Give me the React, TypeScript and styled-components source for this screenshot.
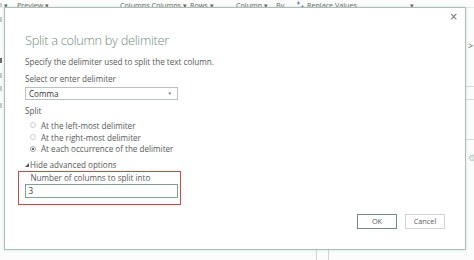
import React from "react";
import styled, { createGlobalStyle } from "styled-components";

const Global = createGlobalStyle`
  html, body { margin: 0; padding: 0; background: #ffffff; }
  body { font-family: "Open Sans", "Noto Sans", sans-serif; overflow: hidden; }
  * { box-sizing: border-box; }
`;

const Screen = styled.div`
  position: relative;
  width: 474px;
  height: 260px;
  overflow: hidden;
  background: #fbfcfb;
`;

const Ribbon = styled.div`
  display: flex;
  align-items: flex-end;
  height: 8px;
  border-bottom: 1px solid #e4ebe7;
  font-size: 7.2px;
  color: #5c6a62;
  line-height: 8px;
  overflow: hidden;
  white-space: nowrap;
`;

const RibbonItem = styled.span<{ $w: number }>`
  flex: 0 0 ${(p) => p.$w}px;
  display: flex;
  align-items: center;
  overflow: hidden;
  transform: translateY(2px);
`;

const SideStrip = styled.div`
  position: absolute;
  top: 9px;
  right: 0;
  width: 8px;
  height: 251px;
  display: flex;
  flex-direction: column;
`;

const SideLine = styled.div<{ $top: number }>`
  margin-top: ${(p) => p.$top}px;
  height: 1px;
  background: #d6dcd9;
`;

const SideGlyph = styled.div<{ $top: number; $color: string }>`
  margin-top: ${(p) => p.$top}px;
  font-size: 9px;
  line-height: 9px;
  color: ${(p) => p.$color};
  padding-left: 2px;
`;

const LeftStrip = styled.div`
  position: absolute;
  top: 9px;
  left: 0;
  width: 4px;
  height: 240px;
  display: flex;
  flex-direction: column;
`;

const LeftMark = styled.div<{ $top: number; $dark?: boolean }>`
  margin-top: ${(p) => p.$top}px;
  width: 2px;
  height: 5px;
  background: ${(p) => (p.$dark ? "#6a6a6a" : "#c5cbc8")};
`;

const BottomTicks = styled.div`
  position: absolute;
  top: 250px;
  left: 316px;
  display: flex;
  gap: 11px;
`;

const Tick = styled.div`
  width: 1px;
  height: 10px;
  background: #d0d6d3;
`;

const Dialog = styled.div`
  position: absolute;
  left: 4px;
  top: 7px;
  width: 462px;
  height: 243px;
  background: #ffffff;
  border: 1.5px solid #a9bfb4;
  box-shadow: 0 0 3px rgba(120, 150, 135, 0.25);
  padding: 24px 20px 0 20px;
  display: flex;
  flex-direction: column;
  color: #555a57;
`;

const Close = styled.button`
  position: absolute;
  top: 4px;
  right: 7px;
  border: none;
  background: none;
  padding: 0;
  font-family: "DejaVu Sans", sans-serif;
  font-size: 10px;
  line-height: 10px;
  color: #6d6d6d;
`;

const Title = styled.h1`
  margin: 0;
  font-family: "Open Sans", sans-serif;
  font-weight: 300;
  font-size: 12.8px;
  line-height: 16.5px;
  color: #6f8b7c;
  letter-spacing: -0.3px;
`;

const Text = styled.div<{ $mt: number }>`
  margin-top: ${(p) => p.$mt}px;
  font-size: 8.1px;
  line-height: 12px;
  color: #555a57;
`;

const SelectBox = styled.div`
  margin-top: 2.5px;
  width: 153px;
  height: 12.5px;
  border: 1px solid #b9c3be;
  display: flex;
  align-items: center;
  justify-content: space-between;
  padding: 0 5px 0 3px;
  font-size: 8.1px;
  color: #333;
`;

const Caret = styled.span`
  font-size: 4.5px;
  color: #777;
`;

const RadioList = styled.div`
  margin-top: 2.6px;
  display: flex;
  flex-direction: column;
  padding-left: 5px;
`;

const RadioRow = styled.label`
  display: flex;
  align-items: center;
  gap: 5px;
  height: 11.75px;
  font-size: 8.1px;
  color: #555a57;
`;

const RadioDot = styled.span<{ $on?: boolean }>`
  width: 6px;
  height: 6px;
  border-radius: 50%;
  border: 1px solid ${(p) => (p.$on ? "#9aa39f" : "#c9d0cc")};
  display: flex;
  align-items: center;
  justify-content: center;
  &::after {
    content: "";
    width: 2px;
    height: 2px;
    border-radius: 50%;
    background: ${(p) => (p.$on ? "#333" : "transparent")};
  }
`;

const Toggle = styled.div`
  margin-top: 4px;
  display: flex;
  align-items: center;
  gap: 1px;
  height: 12px;
  font-size: 8.1px;
  color: #555a57;
`;

const Tri = styled.svg`
  width: 4px;
  height: 4px;
`;

const Advanced = styled.div`
  margin-top: 0px;
  margin-left: -7px;
  width: 163px;
  height: 34px;
  border: 1.6px solid #d9443f;
  padding: 0 0 0 5.5px;
  display: flex;
  flex-direction: column;
`;

const FieldLabel = styled.div`
  padding-left: 6px;
  font-size: 8.1px;
  line-height: 11px;
  color: #555a57;
`;

const NumInput = styled.div`
  margin-top: 1.4px;
  width: 153px;
  height: 13.5px;
  border: 1.3px solid #7fa292;
  padding-left: 3px;
  font-size: 8.1px;
  line-height: 11px;
  color: #444;
`;

const Footer = styled.div`
  margin-top: 9px;
  display: flex;
  justify-content: flex-end;
  gap: 8px;
`;

const Button = styled.button<{ $primary?: boolean }>`
  width: 40px;
  height: 15px;
  padding: 0;
  background: #fff;
  border: ${(p) => (p.$primary ? "1.3px solid #6f8c7e" : "1px solid #cfd3d1")};
  font-family: "Open Sans", sans-serif;
  font-size: 7.3px;
  color: #5a5a5a;
`;

const ReplaceIcon = styled.svg`
  width: 9px;
  height: 8px;
`;

export default function App() {
  return (
    <>
      <Global />
      <Screen>
        <Ribbon>
          <RibbonItem $w={17}>I ▾</RibbonItem>
          <RibbonItem $w={103}>Preview ▾</RibbonItem>
          <RibbonItem $w={70}>Columns Columns ▾</RibbonItem>
          <RibbonItem $w={46}>Rows ▾</RibbonItem>
          <RibbonItem $w={40}>Column ▾</RibbonItem>
          <RibbonItem $w={20}>By</RibbonItem>
          <RibbonItem $w={11}>
            <ReplaceIcon viewBox="0 0 9 8">
              <path d="M1 2 L4 2 M2.5 0.5 L2.5 3.5 M5 6 L8 6 M6.5 4.5 L6.5 7.5" stroke="#4a86c5" strokeWidth="1" fill="none" />
            </ReplaceIcon>
          </RibbonItem>
          <RibbonItem $w={103}>Replace Values</RibbonItem>
          <RibbonItem $w={10}>▾</RibbonItem>
        </Ribbon>
        <LeftStrip>
          <LeftMark $top={8} />
          <LeftMark $top={36} $dark />
          <LeftMark $top={10} />
          <LeftMark $top={8} />
          <LeftMark $top={12} />
        </LeftStrip>
        <SideStrip>
          <SideGlyph $top={32} $color="#555">&gt;</SideGlyph>
          <SideLine $top={36} />
          <SideLine $top={12} />
          <SideLine $top={39} />
          <SideGlyph $top={13} $color="#a8c9b4">⚙</SideGlyph>
        </SideStrip>
        <BottomTicks>
          <Tick />
          <Tick />
        </BottomTicks>
        <Dialog>
          <Close aria-label="Close">×</Close>
          <Title>Split a column by delimiter</Title>
          <Text $mt={7}>Specify the delimiter used to split the text column.</Text>
          <Text $mt={5}>Select or enter delimiter</Text>
          <SelectBox>
            <span>Comma</span>
            <Caret>▼</Caret>
          </SelectBox>
          <Text $mt={5.5}>Split</Text>
          <RadioList>
            <RadioRow>
              <RadioDot />
              At the left-most delimiter
            </RadioRow>
            <RadioRow>
              <RadioDot />
              At the right-most delimiter
            </RadioRow>
            <RadioRow>
              <RadioDot $on />
              At each occurrence of the delimiter
            </RadioRow>
          </RadioList>
          <Toggle>
            <Tri viewBox="0 0 4 4">
              <path d="M4 0 L4 4 L0 4 Z" fill="#555" />
            </Tri>
            Hide advanced options
          </Toggle>
          <Advanced>
            <FieldLabel>Number of columns to split into</FieldLabel>
            <NumInput>3</NumInput>
          </Advanced>
          <Footer>
            <Button $primary>OK</Button>
            <Button>Cancel</Button>
          </Footer>
        </Dialog>
      </Screen>
    </>
  );
}
